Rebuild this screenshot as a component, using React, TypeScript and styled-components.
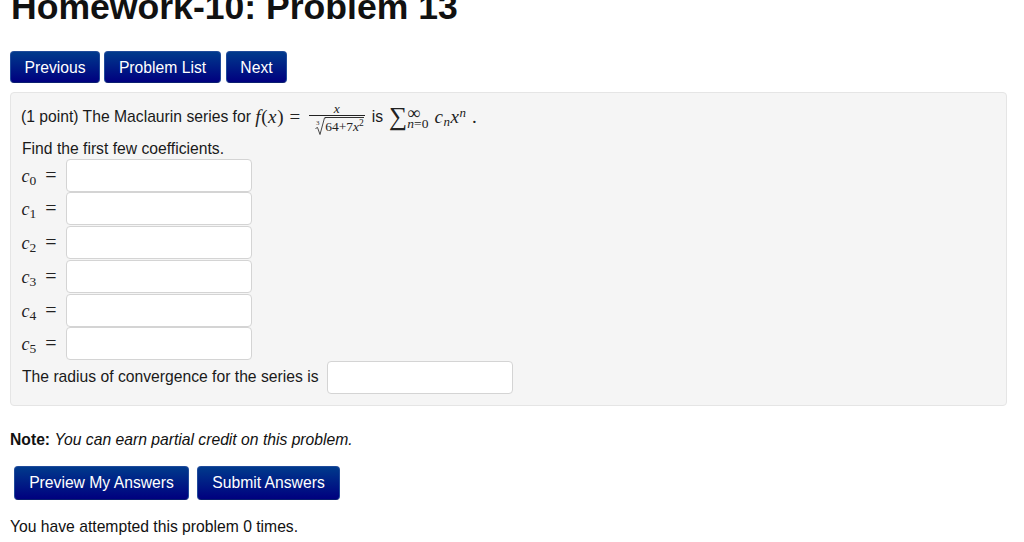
import React from "react";
import styled, { createGlobalStyle } from "styled-components";

const Global = createGlobalStyle`
  html, body { margin: 0; padding: 0; background: #fff; overflow: hidden; }
  body { font-family: "Liberation Sans", Arial, sans-serif; color: #1a1a1a; }
`;
const Page = styled.div`
  width: 1024px;
  height: 542px;
  padding: 0 17px 0 10px;
  box-sizing: border-box;
  overflow: hidden;
`;
const Title = styled.h1`
  margin: -13px 0 0 1px;
  font-size: 35.6px;
  line-height: 40px;
  font-weight: 700;
  color: #111;
  white-space: nowrap;
`;
const Nav = styled.div`
  display: flex;
  gap: 4px;
  margin-top: 24px;
`;
const Button = styled.button`
  height: ${p => p.$h ?? 32}px;
  width: ${p => p.$w}px;
  margin-left: ${p => p.$gap ?? 0}px;
  padding: ${p => (p.$h ? 0 : 1)}px 0 0;
  border: 1px solid #1f4a9a;
  border-bottom-color: #0a1f70;
  border-radius: 4px;
  background: linear-gradient(to bottom, #003a8c, #00007f);
  color: #fff;
  font: 15.7px "Liberation Sans", Arial, sans-serif;
  box-sizing: border-box;
`;
const Panel = styled.div`
  margin-top: 9px;
  height: 314px;
  box-sizing: border-box;
  padding: 8px 11px;
  background: #f5f5f5;
  border: 1px solid #e5e5e5;
  border-radius: 4px;
  font-size: 15.7px;
  display: flex;
  flex-direction: column;
`;
const Intro = styled.div`
  display: flex;
  align-items: center;
  height: 31px;
  white-space: pre;
  margin-left: -1px;
`;
const Find = styled.div`
  margin-top: 7px;
  height: 19px;
  line-height: 19px;
`;
const Rows = styled.div`
  display: flex;
  flex-direction: column;
  gap: 1.8px;
  margin-top: 1px;
`;
const Row = styled.div`
  display: flex;
  align-items: center;
  height: 32px;
`;
const Var = styled.span`
  width: 44px;
  margin-left: -0.5px;
  padding-right: 0.5px;
  font: italic 18px "Liberation Serif", "Times New Roman", serif;
  white-space: nowrap;
  color: #222;
  sub { font-style: normal; font-size: 13.5px; line-height: 0; vertical-align: -3px; }
`;
const Eq = styled.span`
  font-style: normal;
  font-size: 20px;
  margin-left: 9px;
`;
const Field = styled.input`
  width: 186px;
  height: 33px;
  box-sizing: border-box;
  background: #fff;
  border: 1px solid #d4d4d4;
  border-radius: 4px;
  padding: 0;
  margin: 0;
`;
const RadiusRow = styled(Row)`
  margin-top: 2px;
  gap: 8px;
`;
const RadiusText = styled.span`
  line-height: 18px;
  margin: -2px 1px 0 0;
`;
const Serif = styled.span`
  font: italic 19px "Liberation Serif", "Times New Roman", serif;
  color: #222;
  white-space: pre;
  letter-spacing: 0.6px;
`;
const Upright = styled.span`
  font-style: normal;
`;
const Sup = styled.sup`
  font-size: 13px;
  line-height: 0;
  vertical-align: 6px;
`;
const Sub = styled.sub`
  font-size: 13px;
  line-height: 0;
  vertical-align: -3px;
`;
const Fraction = styled.span`
  display: inline-flex;
  flex-direction: column;
  align-items: center;
  margin: 4px 7px 0 8px;
  font: italic 13.5px/13px "Liberation Serif", "Times New Roman", serif;
  color: #222;
`;
const Numer = styled.span`
  height: 13px;
`;
const Denom = styled.span`
  border-top: 1px solid #222;
  display: inline-flex;
  align-items: flex-start;
  width: 56px;
  justify-content: flex-end;
  height: 19px;
  line-height: 17px;
  white-space: pre;
`;
const Root = styled.svg`
  flex: none;
  width: 12px;
  height: 19px;
  margin-top: 1px;
`;
const Radicand = styled.span`
  border-top: 1px solid #333;
  margin: 1px 1px 0 -1px;
  line-height: 15px;
  padding-top: 1px;
  sup { font-size: 9.5px; font-style: normal; line-height: 0; vertical-align: 5px; }
`;
const Sigma = styled.span`
  font: 25.5px/1 "Liberation Serif", "Times New Roman", serif;
  margin-left: 6px;
  color: #222;
`;
const Limits = styled.span`
  display: inline-flex;
  flex-direction: column;
  font: italic 13.5px/11px "Liberation Serif", "Times New Roman", serif;
  color: #222;
  margin: 4px 6px 0 0;
  i { font-style: normal; }
`;
const Inf = styled.span`
  font-style: normal;
  font-size: 18px;
  line-height: 10px;
  margin-left: 0;
`;
const Note = styled.div`
  margin-top: 25px;
  height: 17px;
  line-height: 17px;
  font-size: 15.7px;
  color: #111;
  b { font-weight: 700; }
`;
const Actions = styled.div`
  display: flex;
  gap: 8px;
  margin: 18px 0 0 4px;
`;
const Attempts = styled.div`
  margin-top: 18px;
  height: 18px;
  line-height: 18px;
  font-size: 15.7px;
  color: #111;
`;

const subs = [0, 1, 2, 3, 4, 5];

export default function App() {
  return (
    <Page>
      <Global />
      <Title>Homework-10: Problem 13</Title>
      <Nav>
        <Button $w={90}>Previous</Button>
        <Button $w={117}>Problem List</Button>
        <Button $w={61} $gap={1}>Next</Button>
      </Nav>
      <Panel>
        <Intro>
          (1 point) The Maclaurin series for <Serif>f<Upright>(</Upright>x<Upright>)</Upright> <Upright>=</Upright></Serif>
          <Fraction>
            <Numer>x</Numer>
            <Denom>
              <Root viewBox="0 0 12 19">
                <path d="M1.5 11.5 L3.5 10.5 L6 17.5 L10.5 0.8 L12 0.8" fill="none" stroke="#333" strokeWidth="0.9" />
                <text x="2" y="7.5" fontSize="7" fontStyle="normal" fill="#333">3</text>
              </Root>
              <Radicand><Upright>64+7</Upright>x<sup>2</sup></Radicand>
            </Denom>
          </Fraction>
          is
          <Sigma>∑</Sigma>
          <Limits>
            <Inf>∞</Inf>
            <span>n<i>=0</i></span>
          </Limits>
          <Serif>c<Sub>n</Sub>x<Sup>n</Sup><Upright> .</Upright></Serif>
        </Intro>
        <Find>Find the first few coefficients.</Find>
        <Rows>
          {subs.map(n => (
            <Row key={n}>
              <Var>c<sub>{n}</sub><Eq>=</Eq></Var>
              <Field type="text" />
            </Row>
          ))}
        </Rows>
        <RadiusRow>
          <RadiusText>The radius of convergence for the series is</RadiusText>
          <Field type="text" />
        </RadiusRow>
      </Panel>
      <Note><b>Note:</b> <em>You can earn partial credit on this problem.</em></Note>
      <Actions>
        <Button $w={175} $h={34}>Preview My Answers</Button>
        <Button $w={143} $h={34}>Submit Answers</Button>
      </Actions>
      <Attempts>You have attempted this problem 0 times.</Attempts>
    </Page>
  );
}
